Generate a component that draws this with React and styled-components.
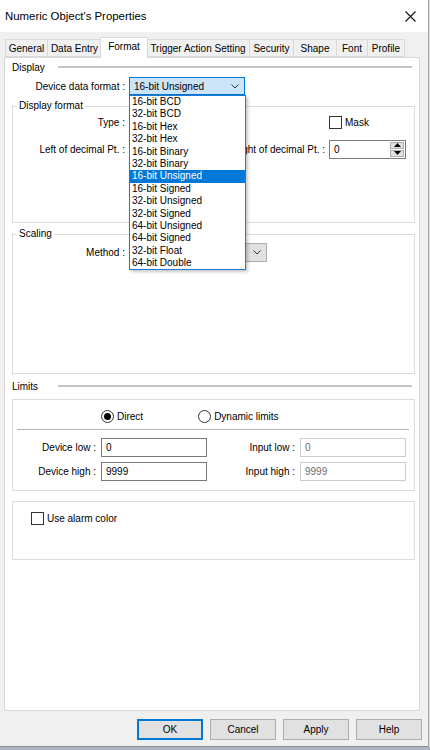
import React from "react";
import styled, { createGlobalStyle } from "styled-components";

const GlobalStyle = createGlobalStyle`
  html, body {
    margin: 0;
    padding: 0;
    background: #a9b6c2;
  }
  body {
    font-family: "Liberation Sans", Arial, sans-serif;
    font-size: 10px;
    color: #000;
  }
  * { box-sizing: border-box; }
`;

const Screen = styled.div`
  display: flex;
  width: 430px;
  height: 750px;
  overflow: hidden;
  background: #a9b6c2;
`;

const Window = styled.div`
  width: 428px;
  height: 747px;
  background: #f0f0f0;
  display: flex;
  flex-direction: column;
  border-bottom: 1px solid #8c8c8c;
`;

const Edge = styled.div`
  width: 2px;
  height: 747px;
  background: #d9dcdf;
  border-left: 1px solid #a6a6a6;
`;

const TitleBar = styled.div`
  height: 32px;
  background: #fff;
  display: flex;
  align-items: center;
  justify-content: space-between;
  padding: 0 12px 0 5px;
`;

const Title = styled.span`
  font-size: 11.4px;
  color: #000;
`;

const TabStrip = styled.div`
  height: 25px;
  display: flex;
  align-items: flex-end;
  padding-left: 5px;
`;

const Tab = styled.div`
  position: relative;
  width: ${(p) => p.$w}px;
  height: ${(p) => (p.$active ? 21 : 18)}px;
  margin-bottom: ${(p) => (p.$active ? -1 : 0)}px;
  margin-left: ${(p) => (p.$active ? -2 : -1)}px;
  margin-right: ${(p) => (p.$active ? -1 : 0)}px;
  z-index: ${(p) => (p.$active ? 1 : 0)};
  background: ${(p) => (p.$active ? "#fff" : "#f0f0f0")};
  border: 1px solid #d9d9d9;
  border-bottom: ${(p) => (p.$active ? "none" : "1px solid #d9d9d9")};
  display: flex;
  align-items: center;
  justify-content: center;
  padding-bottom: ${(p) => (p.$active ? 3 : 0)}px;
  white-space: nowrap;
  &:first-child { margin-left: 0; }
`;

const Panel = styled.div`
  margin-left: 4px;
  width: 416px;
  height: 654px;
  background: #fff;
  border: 1px solid #d9d9d9;
  padding: 2px 4px 0 7px;
  display: flex;
  flex-direction: column;
`;

const SectionHeader = styled.div`
  display: flex;
  align-items: center;
  height: 14px;
  margin-top: ${(p) => p.$top || 0}px;
`;

const SectionLabel = styled.span`
  width: 46px;
`;

const SectionLine = styled.div`
  flex: 1;
  margin-right: 3px;
  height: 2px;
  background: #c4c4c4;
`;

const FormRow = styled.div`
  display: grid;
  grid-template-columns: 113px 116px;
  column-gap: 4px;
  align-items: center;
  margin-top: 3px;
`;

const Label = styled.span`
  display: flex;
  justify-content: flex-end;
  white-space: nowrap;
  min-width: 0;
  padding-right: ${(p) => p.$pad || 0}px;
`;

const SelectWrap = styled.div`
  position: relative;
  width: ${(p) => p.$w}px;
`;

const Select = styled.div`
  height: ${(p) => p.$h || 18}px;
  display: flex;
  align-items: center;
  justify-content: space-between;
  padding: 0 5px 0 4px;
  background: ${(p) => (p.$focus ? "#cce4f7" : "#e1e1e1")};
  border: 1px solid ${(p) => (p.$focus ? "#0078d7" : "#adadad")};
`;

const DropList = styled.div`
  position: absolute;
  top: 100%;
  left: 0;
  width: 117px;
  background: #fff;
  border: 1px solid #1f7ad2;
  box-shadow: 2px 2px 3px rgba(0, 0, 0, 0.22);
  z-index: 5;
`;

const DropItem = styled.div`
  height: 12.4px;
  line-height: 12.4px;
  padding-left: 2px;
  background: ${(p) => (p.$sel ? "#0078d7" : "transparent")};
  color: ${(p) => (p.$sel ? "#fff" : "#000")};
  white-space: nowrap;
`;

const Group = styled.fieldset`
  margin: ${(p) => p.$top || 0}px 0 0 0;
  padding: ${(p) => p.$pad || "0"};
  border: 1px solid #dcdcdc;
  height: ${(p) => p.$h}px;
  min-width: 0;
`;

const Legend = styled.legend`
  margin-left: 4px;
  padding: 0 2px;
  line-height: 12px;
  height: 12px;
`;

const Box = styled.div`
  margin-top: ${(p) => p.$top || 0}px;
  height: ${(p) => p.$h}px;
  border: 1px solid #dcdcdc;
  padding: ${(p) => p.$pad || "0"};
`;

const FormatGrid = styled.div`
  display: grid;
  grid-template-columns: 112px 116px minmax(0, 1fr) 77px;
  grid-auto-rows: 18px;
  column-gap: 4px;
  row-gap: 9px;
  align-items: center;
`;

const CheckItem = styled.label`
  display: flex;
  align-items: center;
  gap: 3px;
  white-space: nowrap;
`;

const CheckBox = styled.span`
  width: 13px;
  height: 13px;
  border: 1px solid #333;
  background: #fff;
  flex: none;
`;

const Spin = styled.div`
  height: 19px;
  display: flex;
  border: 1px solid #7a7a7a;
  background: #fff;
`;

const SpinText = styled.div`
  flex: 1;
  display: flex;
  align-items: center;
  padding-left: 4px;
`;

const SpinButtons = styled.div`
  width: 16px;
  display: flex;
  flex-direction: column;
  gap: 1px;
  padding: 1px;
`;

const SpinButton = styled.div`
  flex: 1;
  background: #e1e1e1;
  border: 1px solid #adadad;
  display: flex;
  align-items: center;
  justify-content: center;
`;

const RadioRow = styled.div`
  display: flex;
  align-items: center;
  height: 14px;
  padding-left: 88px;
  gap: 55px;
`;

const RadioItem = styled.label`
  display: flex;
  align-items: center;
  gap: 3px;
`;

const RadioCircle = styled.span`
  width: 13px;
  height: 13px;
  border-radius: 50%;
  border: 1px solid #333;
  background: #fff;
  display: flex;
  align-items: center;
  justify-content: center;
  &::after {
    content: "";
    width: 7px;
    height: 7px;
    border-radius: 50%;
    background: ${(p) => (p.$on ? "#000" : "transparent")};
  }
`;

const Divider = styled.div`
  margin: 6px 5px 8px 4px;
  height: 1px;
  background: #b4b4b4;
`;

const LimitGrid = styled.div`
  display: grid;
  grid-template-columns: 88px 106px 93px 106px;
  grid-auto-rows: 19px;
  row-gap: 5px;
  align-items: center;
`;

const Input = styled.div`
  height: 19px;
  display: flex;
  align-items: center;
  padding-left: 4px;
  background: #fff;
  border: 1px solid ${(p) => (p.$disabled ? "#cccccc" : "#7a7a7a")};
  color: ${(p) => (p.$disabled ? "#6d6d6d" : "#000")};
`;

const ButtonBar = styled.div`
  display: flex;
  justify-content: flex-end;
  gap: 7px;
  padding-right: 6px;
  margin-top: 8px;
`;

const Button = styled.button`
  width: 66px;
  height: 21px;
  font-family: inherit;
  font-size: 10px;
  color: #000;
  background: #e1e1e1;
  border: ${(p) => (p.$default ? "2px solid #0078d7" : "1px solid #adadad")};
  padding: 0;
`;

const Chevron = () => (
  <svg width="8" height="5" viewBox="0 0 8 5">
    <path d="M0.5 0.5 L4 4 L7.5 0.5" fill="none" stroke="#333" strokeWidth="1" />
  </svg>
);

const CloseIcon = () => (
  <svg width="11" height="11" viewBox="0 0 11 11">
    <path d="M0.5 0.5 L10.5 10.5 M10.5 0.5 L0.5 10.5" stroke="#111" strokeWidth="1.1" />
  </svg>
);

const Arrow = ({ up }) => (
  <svg width="7" height="4" viewBox="0 0 7 4">
    <path d={up ? "M0 4 L3.5 0 L7 4 Z" : "M0 0 L7 0 L3.5 4 Z"} fill="#000" />
  </svg>
);

const tabs = [
  ["General", 43],
  ["Data Entry", 55],
  ["Format", 48],
  ["Trigger Action Setting", 104],
  ["Security", 45],
  ["Shape", 44],
  ["Font", 32],
  ["Profile", 38],
];

const formats = [
  "16-bit BCD",
  "32-bit BCD",
  "16-bit Hex",
  "32-bit Hex",
  "16-bit Binary",
  "32-bit Binary",
  "16-bit Unsigned",
  "16-bit Signed",
  "32-bit Unsigned",
  "32-bit Signed",
  "64-bit Unsigned",
  "64-bit Signed",
  "32-bit Float",
  "64-bit Double",
];

export default function App() {
  return (
    <>
      <GlobalStyle />
      <Screen>
        <Window>
          <TitleBar>
            <Title>Numeric Object's Properties</Title>
            <CloseIcon />
          </TitleBar>

          <TabStrip>
            {tabs.map(([name, w]) => (
              <Tab key={name} $w={w} $active={name === "Format"}>
                {name}
              </Tab>
            ))}
          </TabStrip>

          <Panel>
            <SectionHeader>
              <SectionLabel>Display</SectionLabel>
              <SectionLine />
            </SectionHeader>

            <FormRow>
              <Label>Device data format :</Label>
              <SelectWrap $w={116}>
                <Select $focus>
                  <span>16-bit Unsigned</span>
                  <Chevron />
                </Select>
                <DropList>
                  {formats.map((f) => (
                    <DropItem key={f} $sel={f === "16-bit Unsigned"}>
                      {f}
                    </DropItem>
                  ))}
                </DropList>
              </SelectWrap>
            </FormRow>

            <Group $top={5} $h={123} $pad="1px 8px 0 0">
              <Legend>Display format</Legend>
              <FormatGrid>
                <Label>Type :</Label>
                <Select>
                  <Chevron />
                </Select>
                <span />
                <CheckItem>
                  <CheckBox />
                  Mask
                </CheckItem>

                <Label>Left of decimal Pt. :</Label>
                <Spin />
                <Label>Right of decimal Pt. :</Label>
                <Spin>
                  <SpinText>0</SpinText>
                  <SpinButtons>
                    <SpinButton>
                      <Arrow up />
                    </SpinButton>
                    <SpinButton>
                      <Arrow />
                    </SpinButton>
                  </SpinButtons>
                </Spin>
              </FormatGrid>
            </Group>

            <Group $top={5} $h={146} $pad="3px 0 0 0">
              <Legend>Scaling</Legend>
              <FormatGrid>
                <Label>Method :</Label>
                <SelectWrap $w={138}>
                  <Select $h={19}>
                    <span />
                    <Chevron />
                  </Select>
                </SelectWrap>
              </FormatGrid>
            </Group>

            <SectionHeader $top={5}>
              <SectionLabel>Limits</SectionLabel>
              <SectionLine />
            </SectionHeader>

            <Box $top={6} $h={92} $pad="9px 0 0 0">
              <RadioRow>
                <RadioItem>
                  <RadioCircle $on />
                  Direct
                </RadioItem>
                <RadioItem>
                  <RadioCircle />
                  Dynamic limits
                </RadioItem>
              </RadioRow>
              <Divider />
              <LimitGrid>
                <Label $pad={5}>Device low :</Label>
                <Input>0</Input>
                <Label $pad={5}>Input low :</Label>
                <Input $disabled>0</Input>
                <Label $pad={5}>Device high :</Label>
                <Input>9999</Input>
                <Label $pad={5}>Input high :</Label>
                <Input $disabled>9999</Input>
              </LimitGrid>
            </Box>

            <Box $top={10} $h={59} $pad="10px 0 0 18px">
              <CheckItem>
                <CheckBox />
                Use alarm color
              </CheckItem>
            </Box>
          </Panel>

          <ButtonBar>
            <Button $default>OK</Button>
            <Button>Cancel</Button>
            <Button>Apply</Button>
            <Button>Help</Button>
          </ButtonBar>
        </Window>
        <Edge />
      </Screen>
    </>
  );
}
